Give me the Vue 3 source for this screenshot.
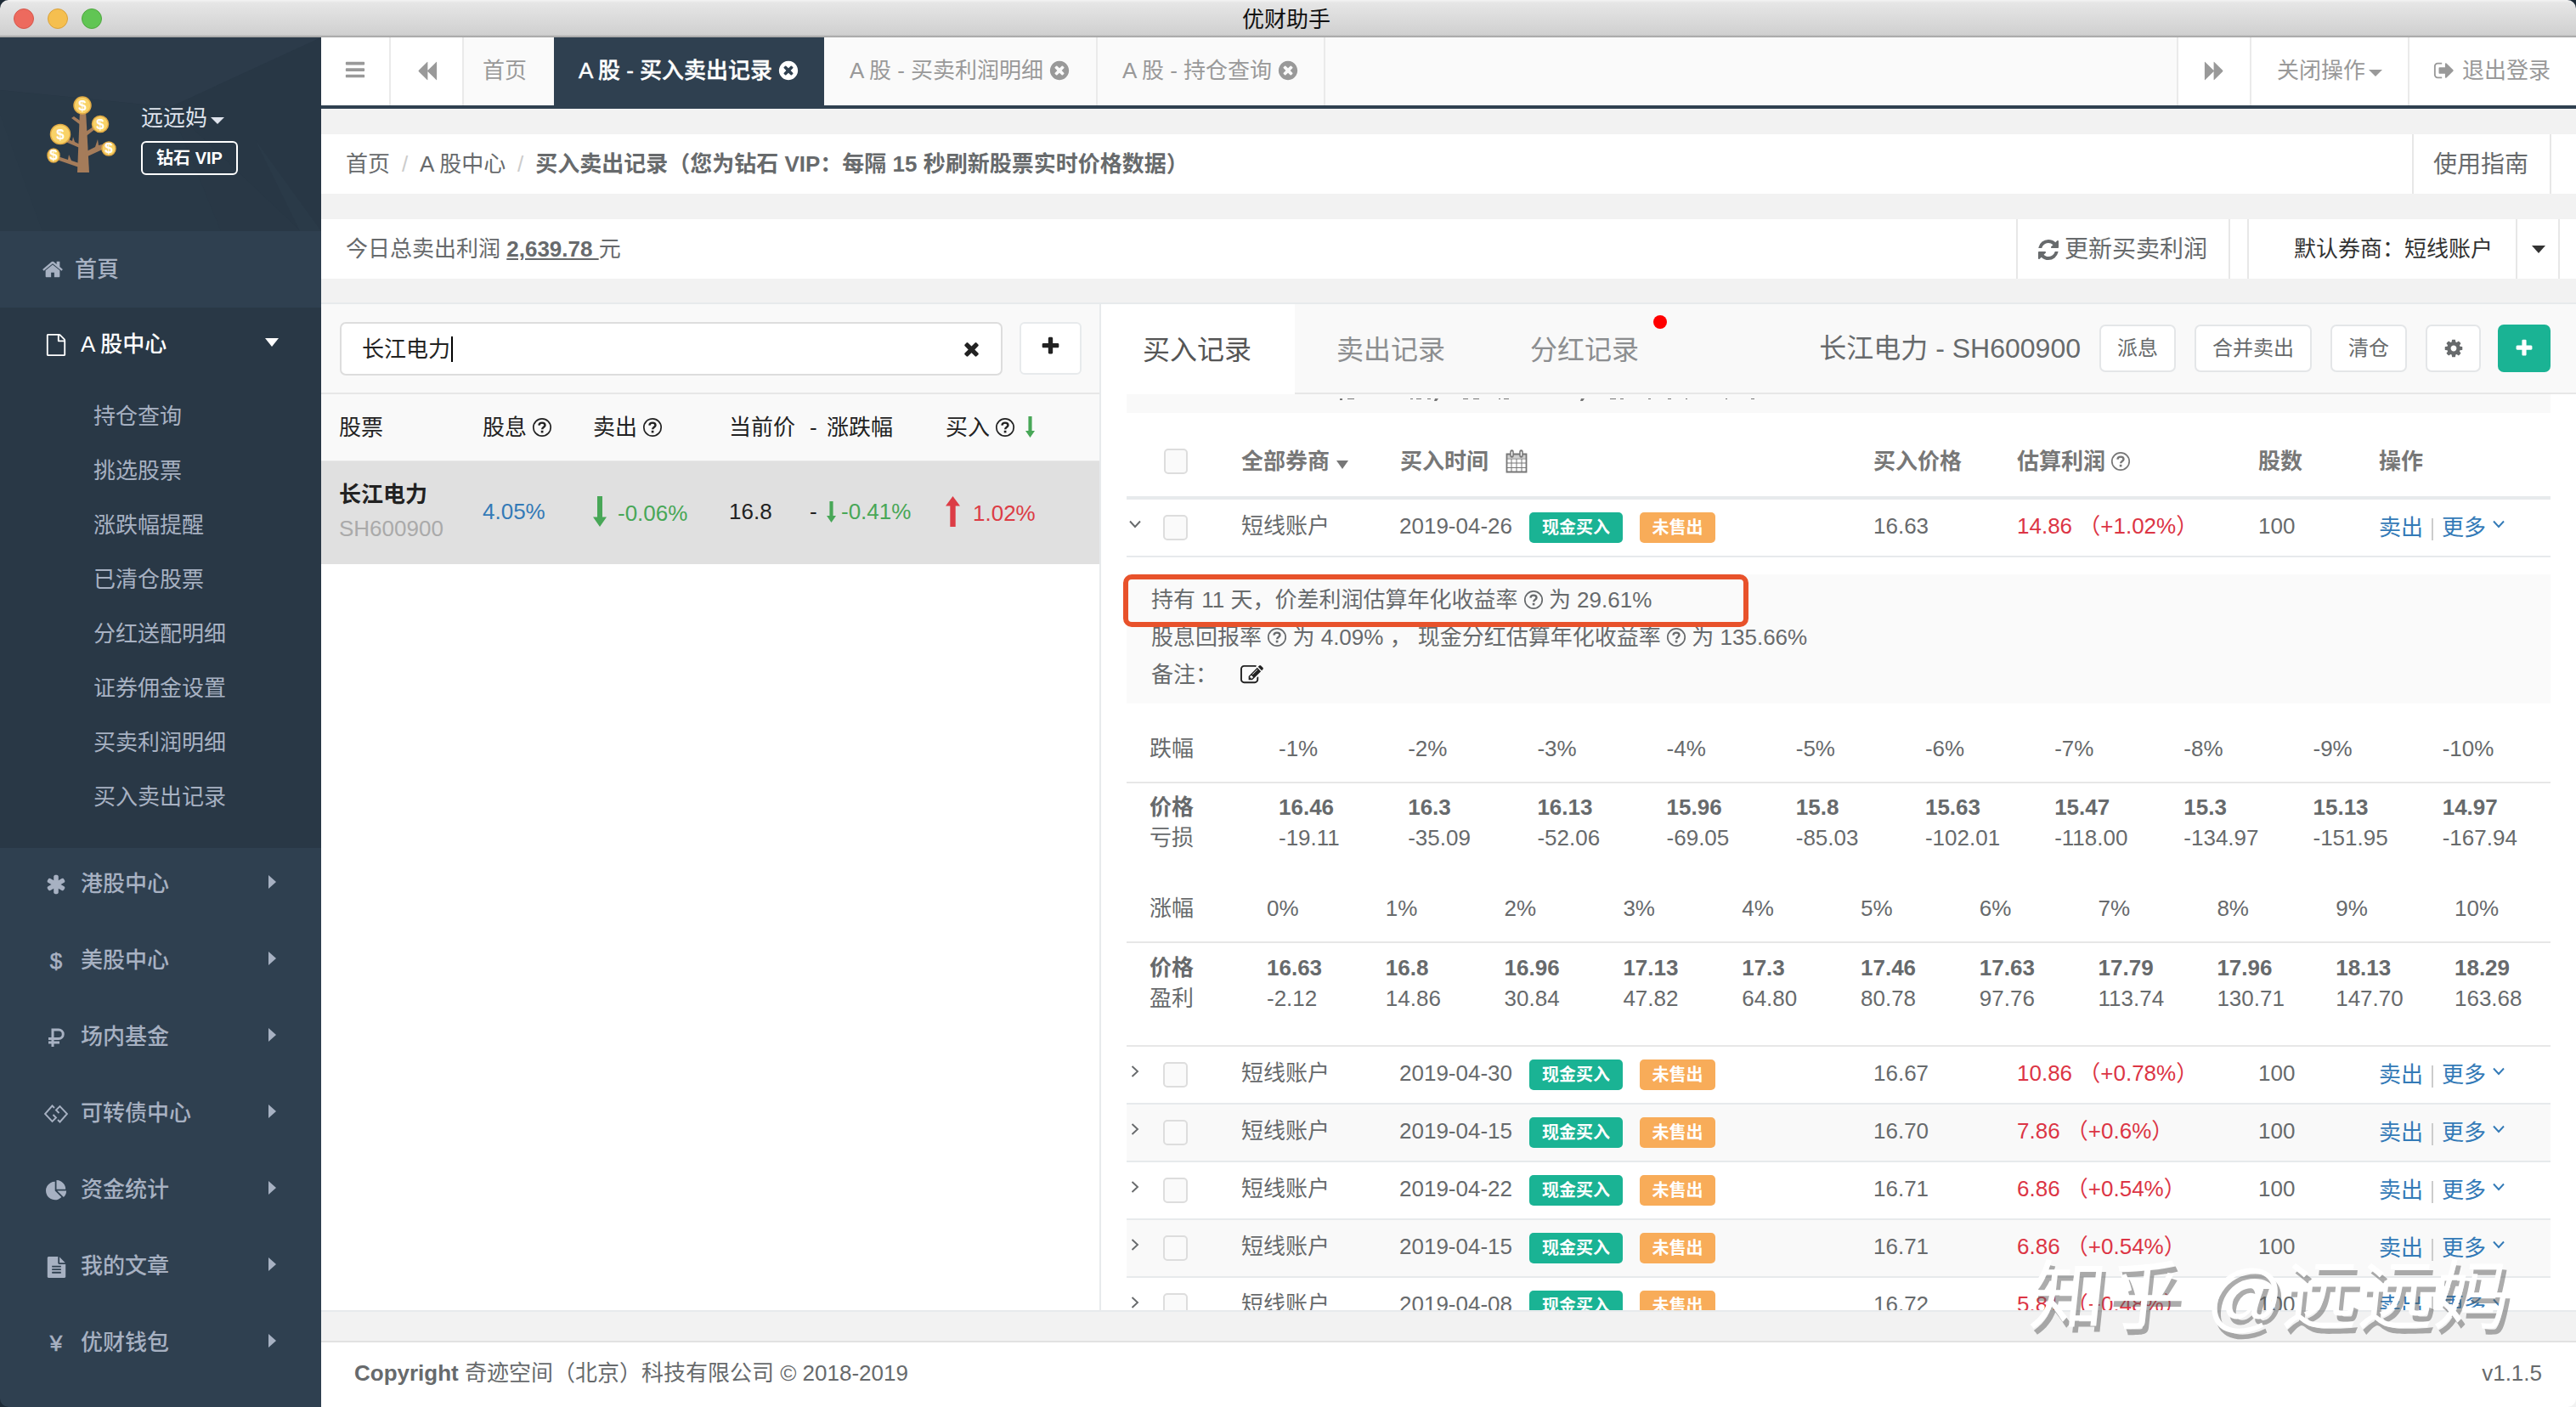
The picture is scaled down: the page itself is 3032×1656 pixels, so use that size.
<script setup>
import { h } from 'vue'

const paths = {
  home: 'M1472 992v480q0 26-19 45t-45 19h-384v-384h-256v384h-384q-26 0-45-19t-19-45v-480q0-1 .5-3t.5-3l575-474 575 474q1 2 1 6zm223-69l-62 74q-8 9-21 11h-3q-13 0-21-7l-692-577-692 577q-12 8-24 7-13-2-21-11l-62-74q-8-10-7-23.5t11-21.5l719-599q32-26 76-26t76 26l244 204v-195q0-14 9-23t23-9h192q14 0 23 9t9 23v408l219 182q10 8 11 21.5t-7 23.5z',
  fileO: 'M1596 380q28 28 48 76t20 88v1152q0 40-28 68t-68 28h-1344q-40 0-68-28t-28-68v-1600q0-40 28-68t68-28h896q40 0 88 20t76 48zm-444-244v376h376q-10-29-22-41l-313-313q-12-12-41-22zm384 1528v-1024h-416q-40 0-68-28t-28-68v-416h-768v1536h1280z',
  fileText: 'M1596 476q14 14 28 36h-472v-472q22 14 36 28zm-476 164h544v1056q0 40-28 68t-68 28h-1344q-40 0-68-28t-28-68v-1600q0-40 28-68t68-28h800v544q0 40 28 68t68 28zm160 736v-64q0-14-9-23t-23-9h-704q-14 0-23 9t-9 23v64q0 14 9 23t23 9h704q14 0 23-9t9-23zm0-256v-64q0-14-9-23t-23-9h-704q-14 0-23 9t-9 23v64q0 14 9 23t23 9h704q14 0 23-9t9-23zm0-256v-64q0-14-9-23t-23-9h-704q-14 0-23 9t-9 23v64q0 14 9 23t23 9h704q14 0 23-9t9-23z',
  pie: 'M768 890l546 546q-106 108-247.5 168t-298.5 60q-209 0-385.5-103t-279.5-279.5-103-385.5 103-385.5 279.5-279.5 385.5-103v762zm187 6h773q0 157-60 298.5t-168 247.5zm709-128h-768v-768q209 0 385.5 103t279.5 279.5 103 385.5z',
  asterisk: 'M1546 1050q46 26 59.5 77.5t-12.5 97.5l-64 110q-26 46-77.5 59.5t-97.5-12.5l-266-153v307q0 52-38 90t-90 38h-128q-52 0-90-38t-38-90v-307l-266 153q-46 26-97.5 12.5t-77.5-59.5l-64-110q-26-46-12.5-97.5t59.5-77.5l266-154-266-154q-46-26-59.5-77.5t12.5-97.5l64-110q26-46 77.5-59.5t97.5 12.5l266 153v-307q0-52 38-90t90-38h128q52 0 90 38t38 90v307l266-153q46-26 97.5-12.5t77.5 59.5l64 110q26 46 12.5 97.5t-59.5 77.5l-266 154z',
  cog: 'M1152 896q0-106-75-181t-181-75-181 75-75 181 75 181 181 75 181-75 75-181zm512-109v222q0 12-8 23t-20 13l-185 28q-19 54-39 91 35 50 107 138 10 12 10 25t-9 23q-27 37-99 108t-94 71q-12 0-26-9l-138-108q-44 23-91 38-16 136-29 186-7 28-36 28h-222q-14 0-24.5-8.5t-11.5-21.5l-28-184q-49-16-90-37l-141 107q-10 9-25 9-14 0-25-11-126-114-165-168-7-10-7-23 0-12 8-23 15-21 51-66.5t54-70.5q-27-50-41-99l-183-27q-13-2-21-12.5t-8-23.5v-222q0-12 8-23t19-13l186-28q14-46 39-92-40-57-107-138-10-12-10-24 0-10 9-23 26-36 98.5-107.5t94.5-71.5q13 0 26 10l138 107q44-23 91-38 16-136 29-186 7-28 36-28h222q14 0 24.5 8.5t11.5 21.5l28 184q49 16 90 37l142-107q9-9 24-9 13 0 25 10 129 119 165 170 7 8 7 22 0 12-8 23-15 21-51 66.5t-54 70.5q26 50 41 98l183 28q13 2 21 12.5t8 23.5z',
  plus: 'M1600 736v192q0 40-28 68t-68 28h-416v416q0 40-28 68t-68 28h-192q-40 0-68-28t-28-68v-416h-416q-40 0-68-28t-28-68v-192q0-40 28-68t68-28h416v-416q0-40 28-68t68-28h192q40 0 68 28t28 68v416h416q40 0 68 28t28 68z',
  times: 'M1490 1322q0 40-28 68l-136 136q-28 28-68 28t-68-28l-294-294-294 294q-28 28-68 28t-68-28l-136-136q-28-28-28-68t28-68l294-294-294-294q-28-28-28-68t28-68l136-136q28-28 68-28t68 28l294 294 294-294q28-28 68-28t68 28l136 136q28 28 28 68t-28 68l-294 294 294 294q28 28 28 68z',
  timesCircle: 'M1277 1122q0-26-19-45l-181-181 181-181q19-19 19-45 0-27-19-46l-90-90q-19-19-46-19-26 0-45 19l-181 181-181-181q-19-19-45-19-27 0-46 19l-90 90q-19 19-19 46 0 26 19 45l181 181-181 181q-19 19-19 45 0 27 19 46l90 90q19 19 46 19 26 0 45-19l181-181 181 181q19 19 45 19 27 0 46-19l90-90q19-19 19-46zm387-226q0 209-103 385.5t-279.5 279.5-385.5 103-385.5-103-279.5-279.5-103-385.5 103-385.5 279.5-279.5 385.5-103 385.5 103 279.5 279.5 103 385.5z',
  refresh: 'M1639 1056q0 5-1 7-64 268-268 434.5t-478 166.5q-146 0-282.5-55t-243.5-157l-129 129q-19 19-45 19t-45-19-19-45v-448q0-26 19-45t45-19h448q26 0 45 19t19 45-19 45l-137 137q71 66 161 102t187 36q134 0 250-65t186-179q11-17 53-117 8-23 30-23h192q13 0 22.5 9.5t9.5 22.5zm25-800v448q0 26-19 45t-45 19h-448q-26 0-45-19t-19-45 19-45l138-138q-148-137-349-137-134 0-250 65t-186 179q-11 17-53 117-8 23-30 23h-199q-13 0-22.5-9.5t-9.5-22.5v-7q65-268 270-434.5t480-166.5q146 0 284 55.5t245 156.5l130-129q19-19 45-19t45 19 19 45z',
  signOut: 'M704 1440q0 4 1 20t.5 26.5-3 23.5-10 19.5-20.5 6.5h-320q-119 0-203.5-84.5t-84.5-203.5v-704q0-119 84.5-203.5t203.5-84.5h320q13 0 22.5 9.5t9.5 22.5q0 4 1 20t.5 26.5-3 23.5-10 19.5-20.5 6.5h-320q-66 0-113 47t-47 113v704q0 66 47 113t113 47h312l11.5 1 11.5 3 8 5.5 7 9 2 13.5zm928-544q0 26-19 45l-544 544q-19 19-45 19t-45-19-19-45v-288h-448q-26 0-45-19t-19-45v-384q0-26 19-45t45-19h448v-288q0-26 19-45t45-19 45 19l544 544q19 19 19 45z',
  backward: 'M1683 141q19-19 32-13t13 32v1472q0 26-13 32t-32-13l-710-710q-9-9-13-19v710q0 26-13 32t-32-13l-710-710q-19-19-19-45t19-45l710-710q19-19 32-13t13 32v710q4-10 13-19z',
  edit: 'M888 1184l116-116-152-152-116 116v56h96v96h56zm440-720q-16-16-33 1l-350 350q-17 17-1 33t33-1l350-350q17-17 1-33zm80 594v190q0 119-84.5 203.5t-203.5 84.5h-832q-119 0-203.5-84.5t-84.5-203.5v-832q0-119 84.5-203.5t203.5-84.5h832q63 0 117 25 15 7 18 23 3 17-9 29l-49 49q-14 14-32 8-23-6-45-6h-832q-66 0-113 47t-47 113v832q0 66 47 113t113 47h832q66 0 113-47t47-113v-126q0-13 9-22l64-64q15-15 35-7t20 29zm-96-738l288 288-672 672h-288v-288zm444 132l-92 92-288-288 92-92q28-28 68-28t68 28l152 152q28 28 28 68t-28 68z',
  bars: 'M64 1216h1536q64 0 64 64v128q0 64-64 64h-1408q-64 0-64-64v-128q0-64 64-64zM192 704h1408q64 0 64 64v128q0 64-64 64h-1408q-64 0-64-64v-128q0-64 64-64zM192 192h1408q64 0 64 64v128q0 64-64 64h-1408q-64 0-64-64v-128q0-64 64-64z',
}
const Icon = (p) =>
  h('svg', { viewBox: '0 0 1792 1792', width: p.size || 26, height: p.size || 26, fill: 'currentColor' }, [h('path', { d: paths[p.name] })])
Icon.props = ['name', 'size']

const Help = () =>
  h('svg', { viewBox: '0 0 24 24', width: 24, height: 24, fill: 'none', stroke: 'currentColor', class: 'help-ic' }, [
    h('circle', { cx: 12, cy: 12, r: 10.2, 'stroke-width': 1.7 }),
    h('path', { d: 'M8.4 9.6C8.6 7.6 10 6.6 12 6.6s3.5 1.2 3.5 3c0 2.2-3.3 2.3-3.3 4.7', 'stroke-width': 2.4 }),
    h('path', { d: 'M12.1 15.8v2.6', 'stroke-width': 2.7 }),
  ])
const Arrow = (p) =>
  h('svg', { viewBox: '0 0 16 36', width: p.w, height: p.h, fill: 'currentColor', preserveAspectRatio: 'none' }, [
    h('path', { d: p.up ? 'M8 0l8 11.500h-5V36h-6V11.500H0z' : 'M8 36l8-11.500h-5V0h-6v24.500H0z' }),
  ])
Arrow.props = { w: Number, h: Number, up: Boolean }
const Chevron = () =>
  h('svg', { viewBox: '0 0 14 10', width: 14, height: 10, fill: 'none', stroke: 'currentColor', 'stroke-width': 1.9 }, [h('path', { d: 'M1 1.500l6 6.500 6-6.500' })])

const submenu = ['持仓查询', '挑选股票', '涨跌幅提醒', '已清仓股票', '分红送配明细', '证券佣金设置', '买卖利润明细', '买入卖出记录']
const menu = [
  { icon: 'asterisk', label: '港股中心' },
  { glyph: '$', label: '美股中心' },
  { rub: true, label: '场内基金' },
  { link: true, label: '可转债中心' },
  { icon: 'pie', label: '资金统计' },
  { icon: 'fileText', label: '我的文章' },
  { glyph: '¥', label: '优财钱包' },
]
const drops = [
  ['-1%', '16.46', '-19.11'], ['-2%', '16.3', '-35.09'], ['-3%', '16.13', '-52.06'], ['-4%', '15.96', '-69.05'], ['-5%', '15.8', '-85.03'],
  ['-6%', '15.63', '-102.01'], ['-7%', '15.47', '-118.00'], ['-8%', '15.3', '-134.97'], ['-9%', '15.13', '-151.95'], ['-10%', '14.97', '-167.94'],
]
const rises = [
  ['0%', '16.63', '-2.12'], ['1%', '16.8', '14.86'], ['2%', '16.96', '30.84'], ['3%', '17.13', '47.82'], ['4%', '17.3', '64.80'], ['5%', '17.46', '80.78'],
  ['6%', '17.63', '97.76'], ['7%', '17.79', '113.74'], ['8%', '17.96', '130.71'], ['9%', '18.13', '147.70'], ['10%', '18.29', '163.68'],
]
const first = { date: '2019-04-26', price: '16.63', profit: '14.86', pct: '+1.02%', open: true }
const rest = [
  { date: '2019-04-30', price: '16.67', profit: '10.86', pct: '+0.78%' },
  { date: '2019-04-15', price: '16.70', profit: '7.86', pct: '+0.6%' },
  { date: '2019-04-22', price: '16.71', profit: '6.86', pct: '+0.54%' },
  { date: '2019-04-15', price: '16.71', profit: '6.86', pct: '+0.54%' },
  { date: '2019-04-08', price: '16.72', profit: '5.81', pct: '+0.48%' },
]
const Row = ({ r }) =>
  h('div', { class: ['rec', r.open && 'open'] }, [
    h('i', { class: ['exp', r.open && 'down'] }, [h(Chevron)]),
    h('span', { class: 'chk' }),
    h('span', { class: 'c-acc' }, '短线账户'),
    h('span', { class: 'c-date' }, r.date),
    h('b', { class: 'badge teal' }, '现金买入'),
    h('b', { class: 'badge amber' }, '未售出'),
    h('span', { class: 'c-price' }, r.price),
    h('span', { class: 'c-profit' }, `${r.profit} （${r.pct}）`),
    h('span', { class: 'c-qty' }, '100'),
    h('span', { class: 'c-op' }, [h('a', '卖出'), h('em'), h('a', '更多'), h(Chevron)]),
  ])
Row.props = ['r']
</script>

<template>
  <div class="window">
    <header class="titlebar">
      <div class="lights"><i class="red"></i><i class="yellow"></i><i class="green"></i></div>
      <span>优财助手</span>
    </header>
    <div class="body">
      <aside class="sidebar">
        <div class="profile">
          <svg class="facets" viewBox="0 0 378 228" preserveAspectRatio="none">
            <path d="M0 0h378v40L200 82 0 62z" fill="#2c3b4a" />
            <path d="M0 62l200 20 60 146H0z" fill="#293947" />
            <path d="M200 82L378 0v228h-24z" fill="#283745" />
            <path d="M0 90l50 138H0z" fill="#2a3a48" />
            <path d="M300 120l78 108h-25z" fill="#2a3a48" />
          </svg>
          <svg class="tree" viewBox="0 0 84 92" width="84" height="92">
            <g fill="#a57c5a">
              <path d="M39 18h7l4 73H36z" />
              <path d="M41 36L29 27l3-2 10 7zM43 45l12-8 2 3-13 10zM41 63L20 54l2-4 8 4 1-5 2 6 8 4zM45 67l12-6 3-9 1 7 12-3 1 4-28 13zM41 86L12 76l1-4 12 4 1-6 3 7 12 4z" />
            </g>
            <g fill="#f9d268" stroke="#e0aa45" stroke-width="1.500">
              <circle cx="42" cy="12" r="10" /><circle cx="63" cy="34" r="9.500" /><circle cx="16" cy="46" r="11.500" /><circle cx="73" cy="63" r="8" /><ellipse cx="8" cy="71" rx="7" ry="8" />
            </g>
            <g class="coin" fill="#fff" text-anchor="middle">
              <text x="42" y="18">$</text><text x="63" y="40">$</text><text x="16" y="52">$</text><text x="73" y="68">$</text><text x="8" y="76">$</text>
            </g>
          </svg>
          <div class="who">
            <div class="name">远远妈<i class="caret"></i></div>
            <div class="vip">钻石 VIP</div>
          </div>
        </div>
        <div class="item home"><span class="ic"><Icon name="home" /></span>首頁</div>
        <div class="group">
          <div class="item on"><span class="ic"><Icon name="fileO" :size="26" /></span>A 股中心<i class="caret"></i></div>
          <div v-for="s in submenu" :key="s" class="sub">{{ s }}</div>
        </div>
        <div v-for="m in menu" :key="m.label" class="item">
          <span class="ic">
            <Icon v-if="m.icon" :name="m.icon" :size="m.icon === 'asterisk' ? 26 : 25" />
            <b v-else-if="m.glyph">{{ m.glyph }}</b>
            <svg v-else-if="m.rub" width="20" height="22" viewBox="0 0 20 22" fill="none" stroke="currentColor" stroke-width="3"><path d="M6 22V2h7a5 5 0 0 1 0 10.500H1M1 17h13" /></svg>
            <svg v-else width="28" height="22" viewBox="0 0 28 22" fill="none" stroke="currentColor" stroke-width="1.900"><path d="M12 4L9.500 1.500 1 11l8.500 9 4.500-4.500-3.500-3.500M16 18l2.500 2.500L27 11l-8.500-9-4.500 4.500 3.500 3.500" /></svg>
          </span>{{ m.label }}<i class="right"></i>
        </div>
      </aside>

      <main>
        <nav class="tabs">
          <div class="t" style="width: 82px"><Icon name="bars" /></div>
          <div class="t" style="width: 86px"><Icon name="backward" :size="25" /></div>
          <div class="t g homet">首页</div>
          <div class="t act" style="width: 318px">A 股 - 买入卖出记录<Icon name="timesCircle" /></div>
          <div class="t g" style="width: 322px">A 股 - 买卖利润明细<Icon name="timesCircle" /></div>
          <div class="t g" style="width: 268px">A 股 - 持仓查询<Icon name="timesCircle" /></div>
          <div class="t g fill"></div>
          <div class="t" style="width: 86px"><Icon name="backward" :size="25" class="flip" /></div>
          <div class="t" style="width: 186px">关闭操作<i class="caret"></i></div>
          <div class="t last"><Icon name="signOut" /><span>退出登录</span></div>
        </nav>
        <div class="bar crumb">
          <span>首页</span><em>/</em><span>A 股中心</span><em>/</em><b>买入卖出记录（您为钻石 VIP：每隔 15 秒刷新股票实时价格数据）</b>
          <div class="guide">使用指南</div>
        </div>
        <div class="bar total">
          <span>今日总卖出利润 <b><u>2,639.78 </u></b>元</span>
          <div class="upd"><Icon name="refresh" :size="28" />更新买卖利润</div>
          <div class="broker">默认券商：短线账户</div>
          <div class="bcaret"><i class="caret"></i></div>
        </div>

        <div class="panels">
          <section class="left">
            <div class="search">
              <div class="input">长江电力<i class="cursor"></i><Icon name="times" :size="25" /></div>
              <div class="add"><Icon name="plus" :size="25" /></div>
            </div>
            <div class="lrow head">
              <span>股票</span><span>股息 <Help /></span><span>卖出 <Help /></span><span>当前价</span><span>-</span><span>涨跌幅</span>
              <span>买入 <Help /><Arrow :w="11" :h="25" class="green sort" /></span>
            </div>
            <div class="lrow stock">
              <span class="nm"><b>长江电力</b><small>SH600900</small></span>
              <span class="blue">4.05%</span>
              <span class="green"><Arrow :w="16" :h="36" /><label>-0.06%</label></span>
              <span>16.8</span><span>-</span>
              <span class="green"><Arrow :w="11" :h="25" class="mini" />-0.41%</span>
              <span class="red"><Arrow :w="17" :h="36" up /><label>1.02%</label></span>
            </div>
          </section>

          <section class="rightp">
            <div class="rhead">
              <div class="rt cur">买入记录</div>
              <div class="rt">卖出记录</div>
              <div class="rt dotted">分红记录<i class="dot"></i></div>
              <div class="tools">
                <span class="stk">长江电力 - SH600900</span>
                <div class="btn" style="width: 90px">派息</div>
                <div class="btn" style="width: 138px">合并卖出</div>
                <div class="btn" style="width: 90px">清仓</div>
                <div class="btn" style="width: 65px"><Icon name="cog" :size="24" /></div>
                <div class="btn go" style="width: 62px"><Icon name="plus" :size="24" /></div>
              </div>
            </div>
            <div class="scroll">
              <div class="prev">
                <svg width="800" height="4" fill="#777"><path d="M251 0h3v2h-3zM260 0h8v1h-8zM334 0h3v1h-3zM341 0h6v1h-6zM354 0h4v1h-4zM363 0h4l-2 3h-3zM396 0h6v1h-6zM408 0h7v1h-7zM438 0h2v1h-2zM444 0h6v1h-6zM535 0h4l-2 3h-3zM569 0h7v1h-7zM581 0h4v1h-4zM614 0h3v1h-3zM637 0h4v1h-4zM658 0h2v1h-2zM705 0h2v1h-2zM735 0h4v1h-4z" /></svg>
              </div>
              <div class="rec thead">
                <i class="exp"></i><span class="chk"></span>
                <b class="c-acc">全部券商<i class="caret"></i></b>
                <b class="c-when">买入时间
                  <svg width="26" height="28" viewBox="0 0 26 28" fill="none" stroke="currentColor"><path d="M1.500 5.500h23v21h-23z" stroke-width="1.800" /><path d="M1.500 11h23M1.500 16h23M1.500 21.500h23M7 11v15M13 11v15M19 11v15" stroke-width="1" /><path d="M1.500 6h23v4h-23z" fill="currentColor" stroke="none" opacity=".35" /><path d="M7.500 2.500v5M18.500 2.500v5" stroke-width="4.500" stroke-linecap="round" /><path d="M7.500 2.500v5M18.500 2.500v5" stroke="#fff" stroke-width="1.500" /></svg>
                </b>
                <b class="c-price">买入价格</b>
                <b class="c-profit">估算利润 <Help /></b>
                <b class="c-qty">股数</b>
                <b class="c-op">操作</b>
              </div>
              <Row :r="first" />
              <div class="detail">
                <div>持有 11 天，价差利润估算年化收益率 <Help /> 为 29.61%</div>
                <div>股息回报率 <Help /> 为 4.09% ， 现金分红估算年化收益率 <Help /> 为 135.66%</div>
                <div>备注： <Icon name="edit" :size="27" class="edit" /></div>
                <i class="frame"></i>
              </div>
              <div class="grid ten">
                <div class="gh"><span>跌幅</span><span v-for="d in drops" :key="d[0]">{{ d[0] }}</span></div>
                <div class="gb"><span><b>价格</b><br />亏损</span><span v-for="d in drops" :key="d[0]"><b>{{ d[1] }}</b><br />{{ d[2] }}</span></div>
              </div>
              <div class="grid eleven">
                <div class="gh"><span>涨幅</span><span v-for="d in rises" :key="d[0]">{{ d[0] }}</span></div>
                <div class="gb"><span><b>价格</b><br />盈利</span><span v-for="d in rises" :key="d[0]"><b>{{ d[1] }}</b><br />{{ d[2] }}</span></div>
              </div>
              <Row v-for="(r, i) in rest" :key="i" :r="r" :class="{ alt: i % 2 }" />
            </div>
          </section>
        </div>
        <footer><span><b>Copyright</b> 奇迹空间（北京）科技有限公司 © 2018-2019</span><span>v1.1.5</span></footer>
      </main>
    </div>
    <div class="mark">知乎 @远远妈</div>
  </div>
</template>

<style>
body { background: #2f4050; overflow: hidden; }
</style>

<style scoped>
.window { position: relative; width: 3032px; height: 1656px; overflow: hidden; font: 26px/36px "Liberation Sans", "Noto Sans CJK SC", sans-serif; color: #676a6c; background: #1d2a36; }
.window :deep(*) { box-sizing: border-box; }
.window :deep(svg) { flex: none; }
.window :deep(span), .window :deep(b) { white-space: nowrap; }
.window :deep(.help-ic) { margin: 0 -1px; }
.titlebar { height: 44px; display: flex; align-items: center; border-radius: 10px 10px 0 0; background: linear-gradient(#f4f4f4 0, #e6e6e6 3px, #d0d0d0 41px, #a6a6a6 43px); color: #111; }
.lights { display: flex; gap: 16px; width: 1462px; padding-left: 16px; }
.lights i { width: 24px; height: 24px; border-radius: 50%; border: 1px solid; }
.lights .red { background: #ed6a5e; border-color: #d5574c; }
.lights .yellow { background: #f5bf4f; border-color: #d9a13b; }
.lights .green { background: #61c554; border-color: #4fa73f; }
.titlebar span { padding-top: 1px; }
.body { display: flex; height: 1612px; }
.caret { display: inline-block; flex: none; border: 8px solid transparent; border-top-color: currentColor; border-bottom: 0; }

.sidebar { width: 378px; flex: none; background: #2f4050; color: #a7b1c2; border-radius: 0 0 0 10px; }
.profile { position: relative; height: 228px; background: #293846; }
.facets { position: absolute; inset: 0; width: 378px; height: 228px; }
.tree { position: absolute; left: 55px; top: 68px; }
.coin { font-size: 17px; font-weight: bold; }
.who { position: relative; padding: 77px 0 0 166px; }
.name { display: flex; align-items: center; height: 36px; color: #dfe4ed; }
.name .caret { margin: 6px 0 0 4px; }
.vip { width: 114px; height: 40px; margin-top: 9px; border: 2.5px solid #fff; border-radius: 6px; color: #fff; font-weight: bold; font-size: 20px; line-height: 37px; text-align: center; }
.item { display: flex; align-items: center; height: 90px; padding-bottom: 6px; font-weight: 500; }
.item .ic { display: flex; justify-content: center; align-items: center; width: 34px; margin: 2px 12px 0 49px; }
.item .ic b { font-size: 26px; line-height: 26px; font-weight: normal; -webkit-text-stroke: 0.6px; }
.item.home { padding-bottom: 1px; }
.item.home .ic { margin: 0 9px 0 45px; }
.item .right { margin: -4px 53px 0 auto; border: 8px solid transparent; border-left: 9px solid currentColor; border-right: 0; }
.group { height: 636px; background: #293846; }
.item.on { color: #fff; height: 97px; padding-bottom: 12px; }
.item.on .caret { margin: -4px 50px 0 auto; border-width: 10px 8px 0; }
.sub { height: 64px; line-height: 63px; padding-left: 110px; }

main { width: 2654px; background: #f2f2f2; }
.tabs { display: flex; height: 84px; background: #fff; border-bottom: 4px solid #2f4050; color: #999; }
.t { display: flex; align-items: center; justify-content: center; gap: 6px; padding-bottom: 2px; border-right: 2px solid #eaeaea; }
.t.g { background: #fafafa; }
.t.homet { width: 106px; border: 0; padding-right: 10px; }
.t.act { background: #2f4050; color: #fff; font-weight: 500; border: 0; -webkit-text-stroke: 0.4px; }
.t.fill { flex: 1; }
.t.last { width: 196px; border: 0; gap: 8px; padding-right: 2px; }
.t .caret { margin: 6px 0 0 -2px; }
.flip { transform: scaleX(-1); }
.bar { display: flex; align-items: center; height: 70px; margin-top: 30px; padding-left: 29px; background: #fff; }
.crumb em { width: 35px; text-align: center; color: #ccc; font-style: normal; }
.guide { display: flex; align-items: center; justify-content: center; height: 70px; width: 164px; margin: 0 29px 0 auto; border: solid #e7e7e7; border-width: 0 2px; font-size: 28px; padding: 2px 2px 0 0; }
.total > div { display: flex; align-items: center; justify-content: center; height: 70px; border: 0 solid #e7e7e7; }
.total .upd { margin-left: auto; width: 252px; border-width: 0 2px; font-size: 28px; gap: 5px; padding: 2px 3px 0 0; }
.total .broker { width: 318px; margin-left: 20px; border-width: 0 2px; color: #333; padding-left: 26px; }
.total .bcaret { width: 50px; border-right-width: 2px; margin-right: 19px; color: #333; padding-left: 2px; }
.bcaret .caret { border-width: 9px 8px 0; }

.panels { display: flex; height: 1188px; margin-top: 28px; border: solid #e7eaec; border-width: 2px 0; background: #fff; }
.left { width: 918px; border-right: 2px solid #e7eaec; color: #222; }
.search { display: flex; gap: 20px; height: 106px; padding: 21px 0 0 22px; background: #f9f9f9; border-bottom: 2px solid #e7e7e7; }
.input { display: flex; align-items: center; width: 780px; height: 63px; padding: 0 22px 0 24px; border: 2px solid #ddd; border-radius: 7px; background: #fff; }
.cursor { width: 2px; height: 30px; background: #000; margin: 0 auto 0 1px; }
.add { display: flex; align-items: center; justify-content: center; width: 73px; height: 62px; border: 2px solid #e7eaec; border-radius: 6px; background: #fff; padding-bottom: 5px; }
.lrow { display: grid; grid-template-columns: 169px 130px 160px 95px 20px 140px auto; align-items: center; padding-left: 21px; }
.lrow > span { display: flex; align-items: center; gap: 7px; }
.head { height: 79px; background: #f9f9f9; border-bottom: 1px solid #e7e7e7; padding-bottom: 1px; }
.sort { margin-left: 6px; }
.stock { height: 121px; background: #e0e0e0; padding-bottom: 3px; }
.stock .nm { flex-direction: column; align-items: flex-start; gap: 4px; }
.stock small { font-size: 26px; color: #aaa; }
.stock label { margin: 4px 0 0 6px; }
.stock .red label { margin-left: 8px; }
.mini { margin-right: -1px; }
.stock .blue { color: #337ab7; }
.green { color: #48a757; }
.red { color: #dc3c45; }

.rightp { width: 1736px; }
.rhead { display: flex; height: 106px; background: #f9f9f9; border-bottom: 2px solid #e7e7e7; }
.rt { position: relative; width: 228px; height: 104px; line-height: 108px; padding-left: 49px; font-size: 32px; color: #8c8e90; }
.rt.cur { background: #fff; color: #555; height: 106px; }
.dot { position: absolute; left: 194px; top: 13px; width: 16px; height: 16px; border-radius: 50%; background: #f00; }
.tools { display: flex; align-items: center; margin-left: auto; gap: 22px; padding-right: 30px; }
.stk { font-size: 32px; }
.btn { display: flex; align-items: center; justify-content: center; height: 56px; border: 2px solid #e4e6e8; border-radius: 7px; background: #fff; font-size: 24px; }
.btn.go { background: #1ab394; border-color: #1ab394; color: #fff; margin-left: -2px; }
.scroll { height: 1078px; overflow: hidden; padding: 0 30px; }
.prev { height: 22px; background: #f9f9f9; line-height: 0; }
.window :deep(.rec) { position: relative; display: grid; grid-template-columns: 44px 91px 186px 153px 130px 275px 169px 284px 142px auto; align-items: center; height: 68px; border-bottom: 2px solid #e7eaec; }
.window :deep(.rec.alt) { background: #f9f9f9; }
.window :deep(.exp) { display: flex; padding-left: 3px; margin-top: -8px; }
.window :deep(.exp svg) { transform: rotate(-90deg); }
.window :deep(.exp.down svg) { transform: none; }
.window :deep(.chk) { width: 29px; height: 30px; border: 2px solid #ddd; border-radius: 5px; background: #fafafa; margin-left: -1px; }
.window :deep(.rec > span:not(.chk)) { margin-top: -4px; }
.window :deep(.rec > b.badge) { display: block; height: 36px; line-height: 37px; border-radius: 5px; color: #fff; font-size: 20px; text-align: center; }
.window :deep(.teal) { background: #1ab394; width: 110px; }
.window :deep(.amber) { background: #f8ac59; width: 89px; }
.window :deep(.c-profit) { color: #dc3545; }
.window :deep(.c-op) { display: flex; align-items: center; color: #337ab7; padding-top: 4px; }
.window :deep(.c-op em) { width: 2px; height: 26px; background: #ccc; margin: 4px 10px 0; }
.window :deep(.c-op svg) { margin: -8px 0 0 8px; }
.window :deep(.rec.thead) { height: 102px; padding-top: 16px; border-bottom: 4px solid #e7eaec; grid-template-columns: 44px 91px 187px 557px 169px 284px 142px auto; }
.rec.thead b { display: flex; align-items: center; color: #777; padding: 0; gap: 7px; }
.window .rec.thead .chk { margin-left: 0; width: 28px; }
.rec.thead .caret { margin: 8px 0 0 1px; border-width: 10px 7px 0; }
.rec.thead .c-when { gap: 20px; }
.detail { position: relative; height: 152px; margin-top: 20px; padding: 8px 0 0 29px; background: #fafafa; }
.detail div { display: flex; align-items: center; height: 44px; white-space: pre; }
.edit { margin-left: 20px; color: #222; }
.frame { position: absolute; left: -4px; top: 0; width: 736px; height: 62px; border: 6px solid #e8522b; border-radius: 10px; }
.grid { padding-top: 16px; }
.gh, .gb { display: grid; padding-left: 27px; }
.ten .gh, .ten .gb { grid-template-columns: 152px repeat(10, 152.2px); }
.eleven .gh, .eleven .gb { grid-template-columns: 138px repeat(11, 139.800px); }
.gh { height: 76px; line-height: 70px; border-bottom: 2px solid #e7e7e7; }
.gb { height: 98px; padding-top: 11px; }
.ten .gh { height: 78px; line-height: 74px; }
.ten .gb { padding-top: 10px; }
.eleven .gb { height: 122px; border-bottom: 2px solid #e7e7e7; }
.eleven { padding-top: 14px; }

footer { display: flex; justify-content: space-between; height: 78px; line-height: 73px; margin-top: 34px; padding: 0 40px 0 39px; background: #fff; border-top: 2px solid #e2e2e2; border-radius: 0 0 10px 0; }
.mark { position: absolute; left: 2390px; top: 1466px; font-size: 89px; line-height: 120px; word-spacing: 5px; color: #fff; text-shadow: 5px 7px 0 rgba(90, 90, 90, 0.5); transform: skewX(-6deg); white-space: nowrap; }
</style>
